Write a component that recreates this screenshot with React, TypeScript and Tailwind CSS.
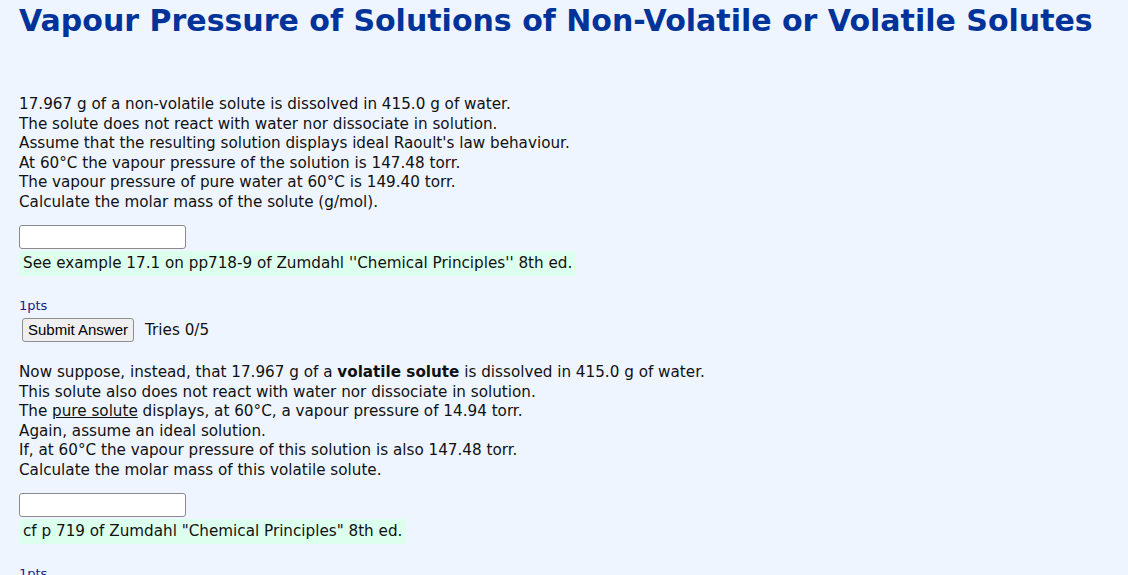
import React from "react";

const font = { fontFamily: '"DejaVu Sans", Verdana, sans-serif' };

function Block({
  lines,
  hint,
}: {
  lines: React.ReactNode[];
  hint: string;
}) {
  return (
    <div>
      <div className="text-[15.2px] leading-[19.5px] text-[#111]">
        {lines.map((l, i) => (
          <div key={i}>{l}</div>
        ))}
      </div>
      <div className="mt-[13px] h-[24px] w-[167px] rounded-[3px] border border-[#8a8a8a] bg-white" />
      <div className="mt-[2px] inline-block bg-[#ddffee] px-[4px] text-[15.2px] leading-[25px] text-[#111]">
        {hint}
      </div>
    </div>
  );
}

export default function App() {
  return (
    <div className="min-h-[575px] w-full bg-[#eef5ff] pl-[19px]" style={font}>
      <h1 className="pt-[1px] text-[30px] font-bold leading-[40px] text-[#003399]">
        Vapour Pressure of Solutions of Non-Volatile or Volatile Solutes
      </h1>
      <div className="pt-[54px]">
        <Block
          lines={[
            "17.967 g of a non-volatile solute is dissolved in 415.0 g of water.",
            "The solute does not react with water nor dissociate in solution.",
            "Assume that the resulting solution displays ideal Raoult's law behaviour.",
            "At 60\u00b0C the vapour pressure of the solution is 147.48 torr.",
            "The vapour pressure of pure water at 60\u00b0C is 149.40 torr.",
            "Calculate the molar mass of the solute (g/mol).",
          ]}
          hint={"See example 17.1 on pp718-9 of Zumdahl ''Chemical Principles'' 8th ed."}
        />
        <div className="mt-[22px] text-[13px] leading-[16px] text-[#1a1a8c]">1pts</div>
        <div className="mt-[4px] flex items-center">
          <button
            className="ml-[3px] h-[24px] rounded-[3px] border border-[#8f8f8f] bg-[#efefef] px-[5px] text-[15px] leading-[20px] text-black"
            style={{ fontFamily: '"Liberation Sans", Arial, sans-serif' }}
          >
            Submit Answer
          </button>
          <span className="ml-[11px] text-[15.2px] text-[#111]">Tries 0/5</span>
        </div>
        <div className="mt-[21px]">
          <Block
            lines={[
              <>
                Now suppose, instead, that 17.967 g of a <b>volatile solute</b> is dissolved in 415.0 g of water.
              </>,
              "This solute also does not react with water nor dissociate in solution.",
              <>
                The <u>pure solute</u> displays, at 60{"\u00b0"}C, a vapour pressure of 14.94 torr.
              </>,
              "Again, assume an ideal solution.",
              "If, at 60\u00b0C the vapour pressure of this solution is also 147.48 torr.",
              "Calculate the molar mass of this volatile solute.",
            ]}
            hint={'cf p 719 of Zumdahl "Chemical Principles" 8th ed.'}
          />
          <div className="mt-[22px] text-[13px] leading-[16px] text-[#1a1a8c]">1pts</div>
        </div>
      </div>
    </div>
  );
}
